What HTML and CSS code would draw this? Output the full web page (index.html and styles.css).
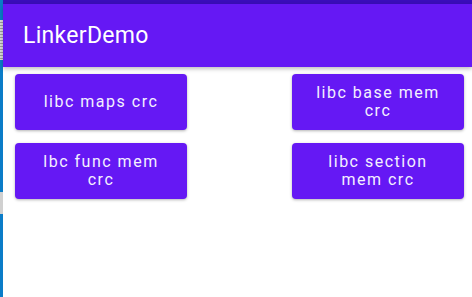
FILE: index.html
```html
<!DOCTYPE html>
<html lang="en">
<head>
    <meta charset="UTF-8">
    <meta name="viewport" content="width=device-width, initial-scale=1.0">
    <title>LinkerDemo</title>
    <link rel="stylesheet" href="styles.css">
</head>
<body>
    <div class="edge">
        <div class="edge-grip"></div>
        <div class="edge-gap"></div>
        <div class="edge-box"></div>
    </div>
    <div class="app">
        <div class="status-bar"></div>
        <header class="toolbar">
            <h1>LinkerDemo</h1>
        </header>
        <main class="content">
            <button class="btn">libc maps crc</button>
            <button class="btn">libc base mem crc</button>
            <button class="btn">lbc func mem crc</button>
            <button class="btn">libc section mem crc</button>
        </main>
    </div>
</body>
</html>
```

FILE: styles.css
```css
* {
    margin: 0;
    padding: 0;
    box-sizing: border-box;
    font-family: Roboto, 'Liberation Sans', sans-serif;
}

body {
    display: flex;
    width: 472px;
    height: 297px;
    overflow: hidden;
    background-color: #ffffff;
}

.edge {
    width: 3px;
    display: flex;
    flex-direction: column;
    background-color: #0a7cc8;
}

.edge-grip {
    margin-top: 20px;
    height: 40px;
    background: repeating-linear-gradient(#d8d8d8 0 2px, #9a9a9a 2px 3px);
}

.edge-gap {
    height: 132px;
}

.edge-box {
    height: 22px;
    background-color: #d0d0d0;
}

.app {
    flex: 1;
    display: flex;
    flex-direction: column;
}

.status-bar {
    height: 4px;
    background-color: #3a0dba;
}

.toolbar {
    height: 63px;
    display: flex;
    align-items: center;
    padding-left: 20px;
    background-color: #6518f4;
    box-shadow: 0 2px 4px rgba(0, 0, 0, 0.25);
    position: relative;
}

.toolbar h1 {
    color: #ffffff;
    font-size: 23px;
    font-weight: 400;
    letter-spacing: 0.3px;
}

.content {
    display: grid;
    grid-template-columns: 172px 172px;
    justify-content: space-between;
    row-gap: 13px;
    padding: 7px 8px 0 12px;
}

.btn {
    height: 56px;
    border: none;
    border-radius: 4px;
    background-color: #6518f4;
    color: #f4f0ff;
    font-size: 16px;
    font-weight: 400;
    line-height: 18px;
    letter-spacing: 1.5px;
    padding: 0 18px;
    box-shadow: 0 1px 3px rgba(0, 0, 0, 0.3);
}
```
